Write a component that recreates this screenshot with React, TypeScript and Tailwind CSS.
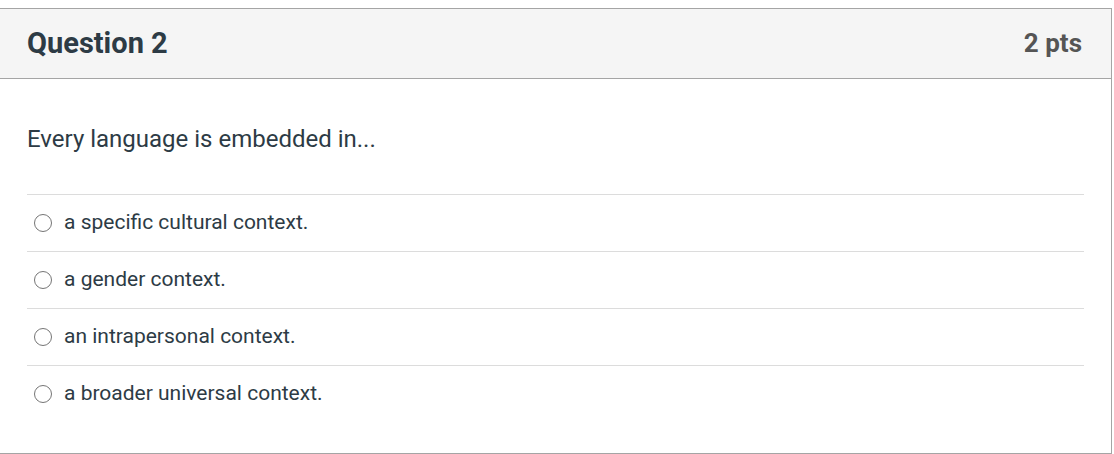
const answers = [
  'a specific cultural context.',
  'a gender context.',
  'an intrapersonal context.',
  'a broader universal context.',
];

export default function App() {
  return (
    <div className="min-h-screen bg-white pt-2 font-['Roboto',_'Liberation_Sans',_sans-serif]">
      <div className="-ml-px w-[1113px] border border-[#a5a5a5] bg-white">
        <div className="flex h-[70px] items-center justify-between border-b border-[#a5a5a5] bg-[#f5f5f5] pl-[27px] pr-[29px]">
          <h2 className="text-[29px] font-bold text-[#2d3b45]">Question 2</h2>
          <span className="text-[26px] font-bold text-[#555]">2 pts</span>
        </div>
        <div className="px-[27px] pt-[44px] pb-[31px]">
          <p className="mb-[38px] text-[24px] leading-[33px] text-[#2d3b45]">Every language is embedded in...</p>
          <div className="flex flex-col">
            {answers.map(a => (
              <label key={a} className="flex h-[57px] items-center border-t border-[#dcdcdc] pl-[7px]">
                <span className="h-[18px] w-[18px] rounded-full border-[1.5px] border-[#757575] bg-white" />
                <span className="ml-[12px] text-[21px] text-[#2d3b45]">{a}</span>
              </label>
            ))}
          </div>
        </div>
      </div>
    </div>
  );
}
